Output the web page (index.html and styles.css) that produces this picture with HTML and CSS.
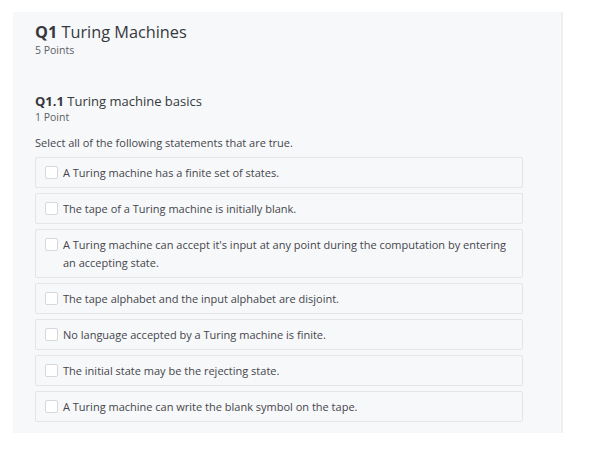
FILE: index.html
```html
<!DOCTYPE html>
<html>
<head>
<meta charset="utf-8">
<link rel="stylesheet" href="styles.css">
</head>
<body>
<div class="panel">
  <div class="q-head">
    <h1 class="q-title"><b>Q1</b> Turing Machines</h1>
    <div class="q-points">5 Points</div>
  </div>
  <div class="sub-head">
    <h2 class="sub-title"><b>Q1.1</b> Turing machine basics</h2>
    <div class="q-points">1 Point</div>
  </div>
  <p class="prompt">Select all of the following statements that are true.</p>
  <div class="options">
    <label class="option"><span class="box"></span><span class="text">A Turing machine has a finite set of states.</span></label>
    <label class="option"><span class="box"></span><span class="text">The tape of a Turing machine is initially blank.</span></label>
    <label class="option"><span class="box"></span><span class="text">A Turing machine can accept it's input at any point during the computation by entering an accepting state.</span></label>
    <label class="option"><span class="box"></span><span class="text">The tape alphabet and the input alphabet are disjoint.</span></label>
    <label class="option"><span class="box"></span><span class="text">No language accepted by a Turing machine is finite.</span></label>
    <label class="option"><span class="box"></span><span class="text">The initial state may be the rejecting state.</span></label>
    <label class="option"><span class="box"></span><span class="text">A Turing machine can write the blank symbol on the tape.</span></label>
  </div>
</div>
</body>
</html>
```
FILE: styles.css
```css
html, body {
  margin: 0;
  padding: 0;
  background: #ffffff;
}
body {
  font-family: "Open Sans", "Liberation Sans", sans-serif;
  color: #44464b;
}
.panel {
  margin: 12px 0 0 13px;
  width: 550px;
  height: 421px;
  box-sizing: border-box;
  background: #f7f8fa;
  border-right: 2px solid #eeeff2;
  padding: 10px 38px 0 22px;
}
.q-title {
  margin: 0;
  font-size: 16.3px;
  line-height: 21px;
  font-weight: 400;
  color: #36383d;
}
.q-title b, .sub-title b {
  font-weight: 700;
}
.q-points {
  font-size: 10.5px;
  line-height: 14px;
  color: #5c5f66;
}
.sub-head {
  margin-top: 36px;
}
.sub-title {
  margin: 0;
  font-size: 13px;
  line-height: 17px;
  font-weight: 400;
  color: #36383d;
}
.prompt {
  margin: 11px 0 7px;
  font-size: 11px;
  line-height: 15px;
}
.options {
  display: flex;
  flex-direction: column;
  gap: 5px;
}
.option {
  display: flex;
  align-items: flex-start;
  gap: 5px;
  border: 1px solid #e4e5e9;
  border-radius: 2px;
  background: #f7f8fa;
  padding: 6px 10px 5px 9px;
  font-size: 11px;
  line-height: 18px;
}
.box {
  flex: none;
  width: 11px;
  height: 11px;
  margin-top: 2px;
  border: 1px solid #d6d8dc;
  border-radius: 2px;
  background: #ffffff;
}
.text {
  flex: 1;
}
```
